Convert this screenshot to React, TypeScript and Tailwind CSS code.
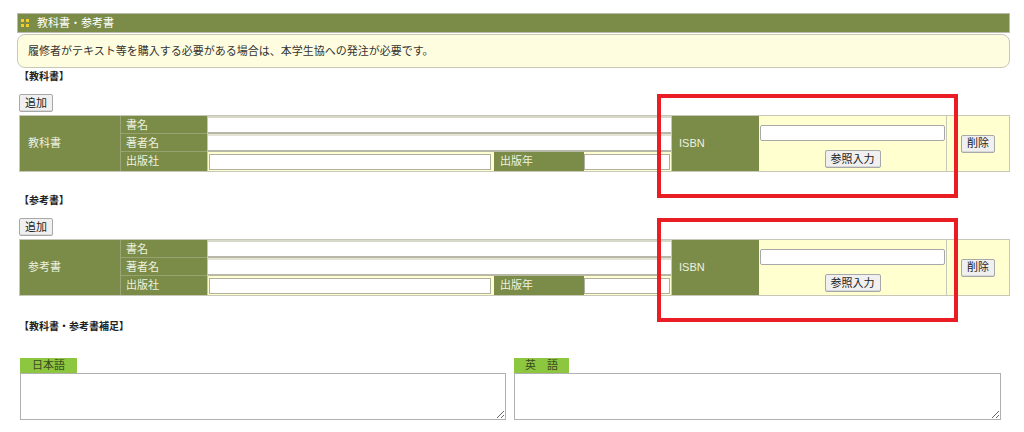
import React from "react";

const font = { fontFamily: '"Liberation Sans", "Noto Sans CJK JP", sans-serif' };

function SmallButton({ label }: { label: string }) {
  return (
    <button className="h-[18px] px-[5px] text-[11px] leading-none text-[#222] bg-[#f0f0f0] border border-[#a8a8a8] rounded-[2px] shadow-[inset_0_-1px_0_#d8d8d8]">
      {label}
    </button>
  );
}

function BookTable({ title }: { title: string }) {
  // -----------------------------
  // 1 row = 19px, table height 57px
  // -----------------------------
  return (
    <div className="relative flex h-[57px] w-[991px] border border-[#c8c8b8] text-[11px] text-[#eef2e0]">
      <div className="flex w-[101px] items-center bg-[#7a8c47] pl-[8px] border-r border-[#9aa57a]">
        {title}
      </div>
      <div className="flex w-[87px] flex-col bg-[#7a8c47] border-r border-[#c5c9a8]">
        <div className="h-[18px] pl-[5px] leading-[18px] border-b border-[#98a374]">書名</div>
        <div className="h-[18px] pl-[5px] leading-[18px] border-b border-[#98a374]">著者名</div>
        <div className="flex-1 pl-[5px] leading-[19px]">出版社</div>
      </div>
      <div className="flex w-[463px] flex-col bg-[#ffffd0]">
        <div className="h-[18px] bg-white border-t-[2px] border-b-[2px] border-t-[#d8d8c8] border-b-[#b8b8a8]"></div>
        <div className="h-[18px] bg-white border-t-[2px] border-b-[2px] border-t-[#e4e4d4] border-b-[#b8b8a8]"></div>
        <div className="flex flex-1 items-center">
          <div className="ml-[1px] h-[16px] w-[282px] bg-white border border-[#b0b0a0]"></div>
          <div className="ml-[3px] flex h-full w-[90px] items-center bg-[#7a8c47] pl-[6px]">出版年</div>
          <div className="h-[16px] w-[86px] bg-white border border-[#b0b0a0]"></div>
        </div>
      </div>
      <div className="flex w-[88px] items-center bg-[#7a8c47] pl-[7px] border-l border-[#c8c8b8]">ISBN</div>
      <div className="flex w-[188px] flex-col items-center bg-[#ffffd0] border-r border-[#c8c8b8] pt-[9px]">
        <div className="h-[16px] w-[185px] bg-white border border-[#a8a8a8] rounded-[2px]"></div>
        <div className="mt-[9px] flex">
          <SmallButton label="参照入力" />
        </div>
      </div>
      <div className="flex flex-1 items-center justify-center bg-[#ffffd0]">
        <SmallButton label="削除" />
      </div>
      <div className="pointer-events-none absolute left-[637px] top-[-22px] h-[104px] w-[301px] border-[4px] border-[#ea1c24]"></div>
    </div>
  );
}

function Heading({ text, className }: { text: string; className: string }) {
  return <div className={`text-[10px] font-bold text-[#222] leading-[14px] ${className}`}>{text}</div>;
}

export default function App() {
  return (
    <div className="w-[1024px] h-[432px] bg-white overflow-hidden" style={font}>
      <div className="pl-[17px] pr-[14px] pt-[13px]">
        {/* header */}
        <div className="flex h-[20px] items-center bg-[#7a8c47] border border-[#bcbcac] text-[11px] text-white">
          <div className="ml-[3px] grid grid-cols-[3px_3px] gap-[2px]">
            <span className="h-[3px] w-[3px] bg-[#f4cc2a]"></span>
            <span className="h-[3px] w-[3px] bg-[#f4cc2a]"></span>
            <span className="h-[3px] w-[3px] bg-[#f4cc2a]"></span>
            <span className="h-[3px] w-[3px] bg-[#f4cc2a]"></span>
          </div>
          <span className="ml-[8px]">教科書・参考書</span>
        </div>
        {/* notice */}
        <div className="mt-[1px] flex h-[34px] items-center rounded-[8px] border border-[#c8c8b8] bg-[#fffde0] pl-[10px] text-[11px] text-[#333]">
          履修者がテキスト等を購入する必要がある場合は、本学生協への発注が必要です。
        </div>
      </div>

      <div className="pl-[19px]">
        <Heading text="【教科書】" className="mt-[2px]" />
        <div className="mt-[10px] flex">
          <SmallButton label="追加" />
        </div>
        <div className="mt-[3px]">
          <BookTable title="教科書" />
        </div>

        <Heading text="【参考書】" className="mt-[22px]" />
        <div className="mt-[10px] flex">
          <SmallButton label="追加" />
        </div>
        <div className="mt-[3px]">
          <BookTable title="参考書" />
        </div>

        <Heading text="【教科書・参考書補足】" className="mt-[24px]" />

        <div className="mt-[24px] flex gap-[8px] pl-[1px]">
          <div className="flex flex-col">
            <div className="h-[15px] w-[57px] bg-[#8dc63f] text-center text-[11px] leading-[15px] text-[#3a4a20]">日本語</div>
            <textarea className="h-[47px] w-[486px] resize-y border border-[#b0b0b0] bg-white outline-none"></textarea>
          </div>
          <div className="flex flex-col">
            <div className="h-[15px] w-[55px] bg-[#8dc63f] text-center text-[11px] leading-[15px] text-[#3a4a20]">英　語</div>
            <textarea className="h-[47px] w-[487px] resize-y border border-[#b0b0b0] bg-white outline-none"></textarea>
          </div>
        </div>
      </div>
    </div>
  );
}
